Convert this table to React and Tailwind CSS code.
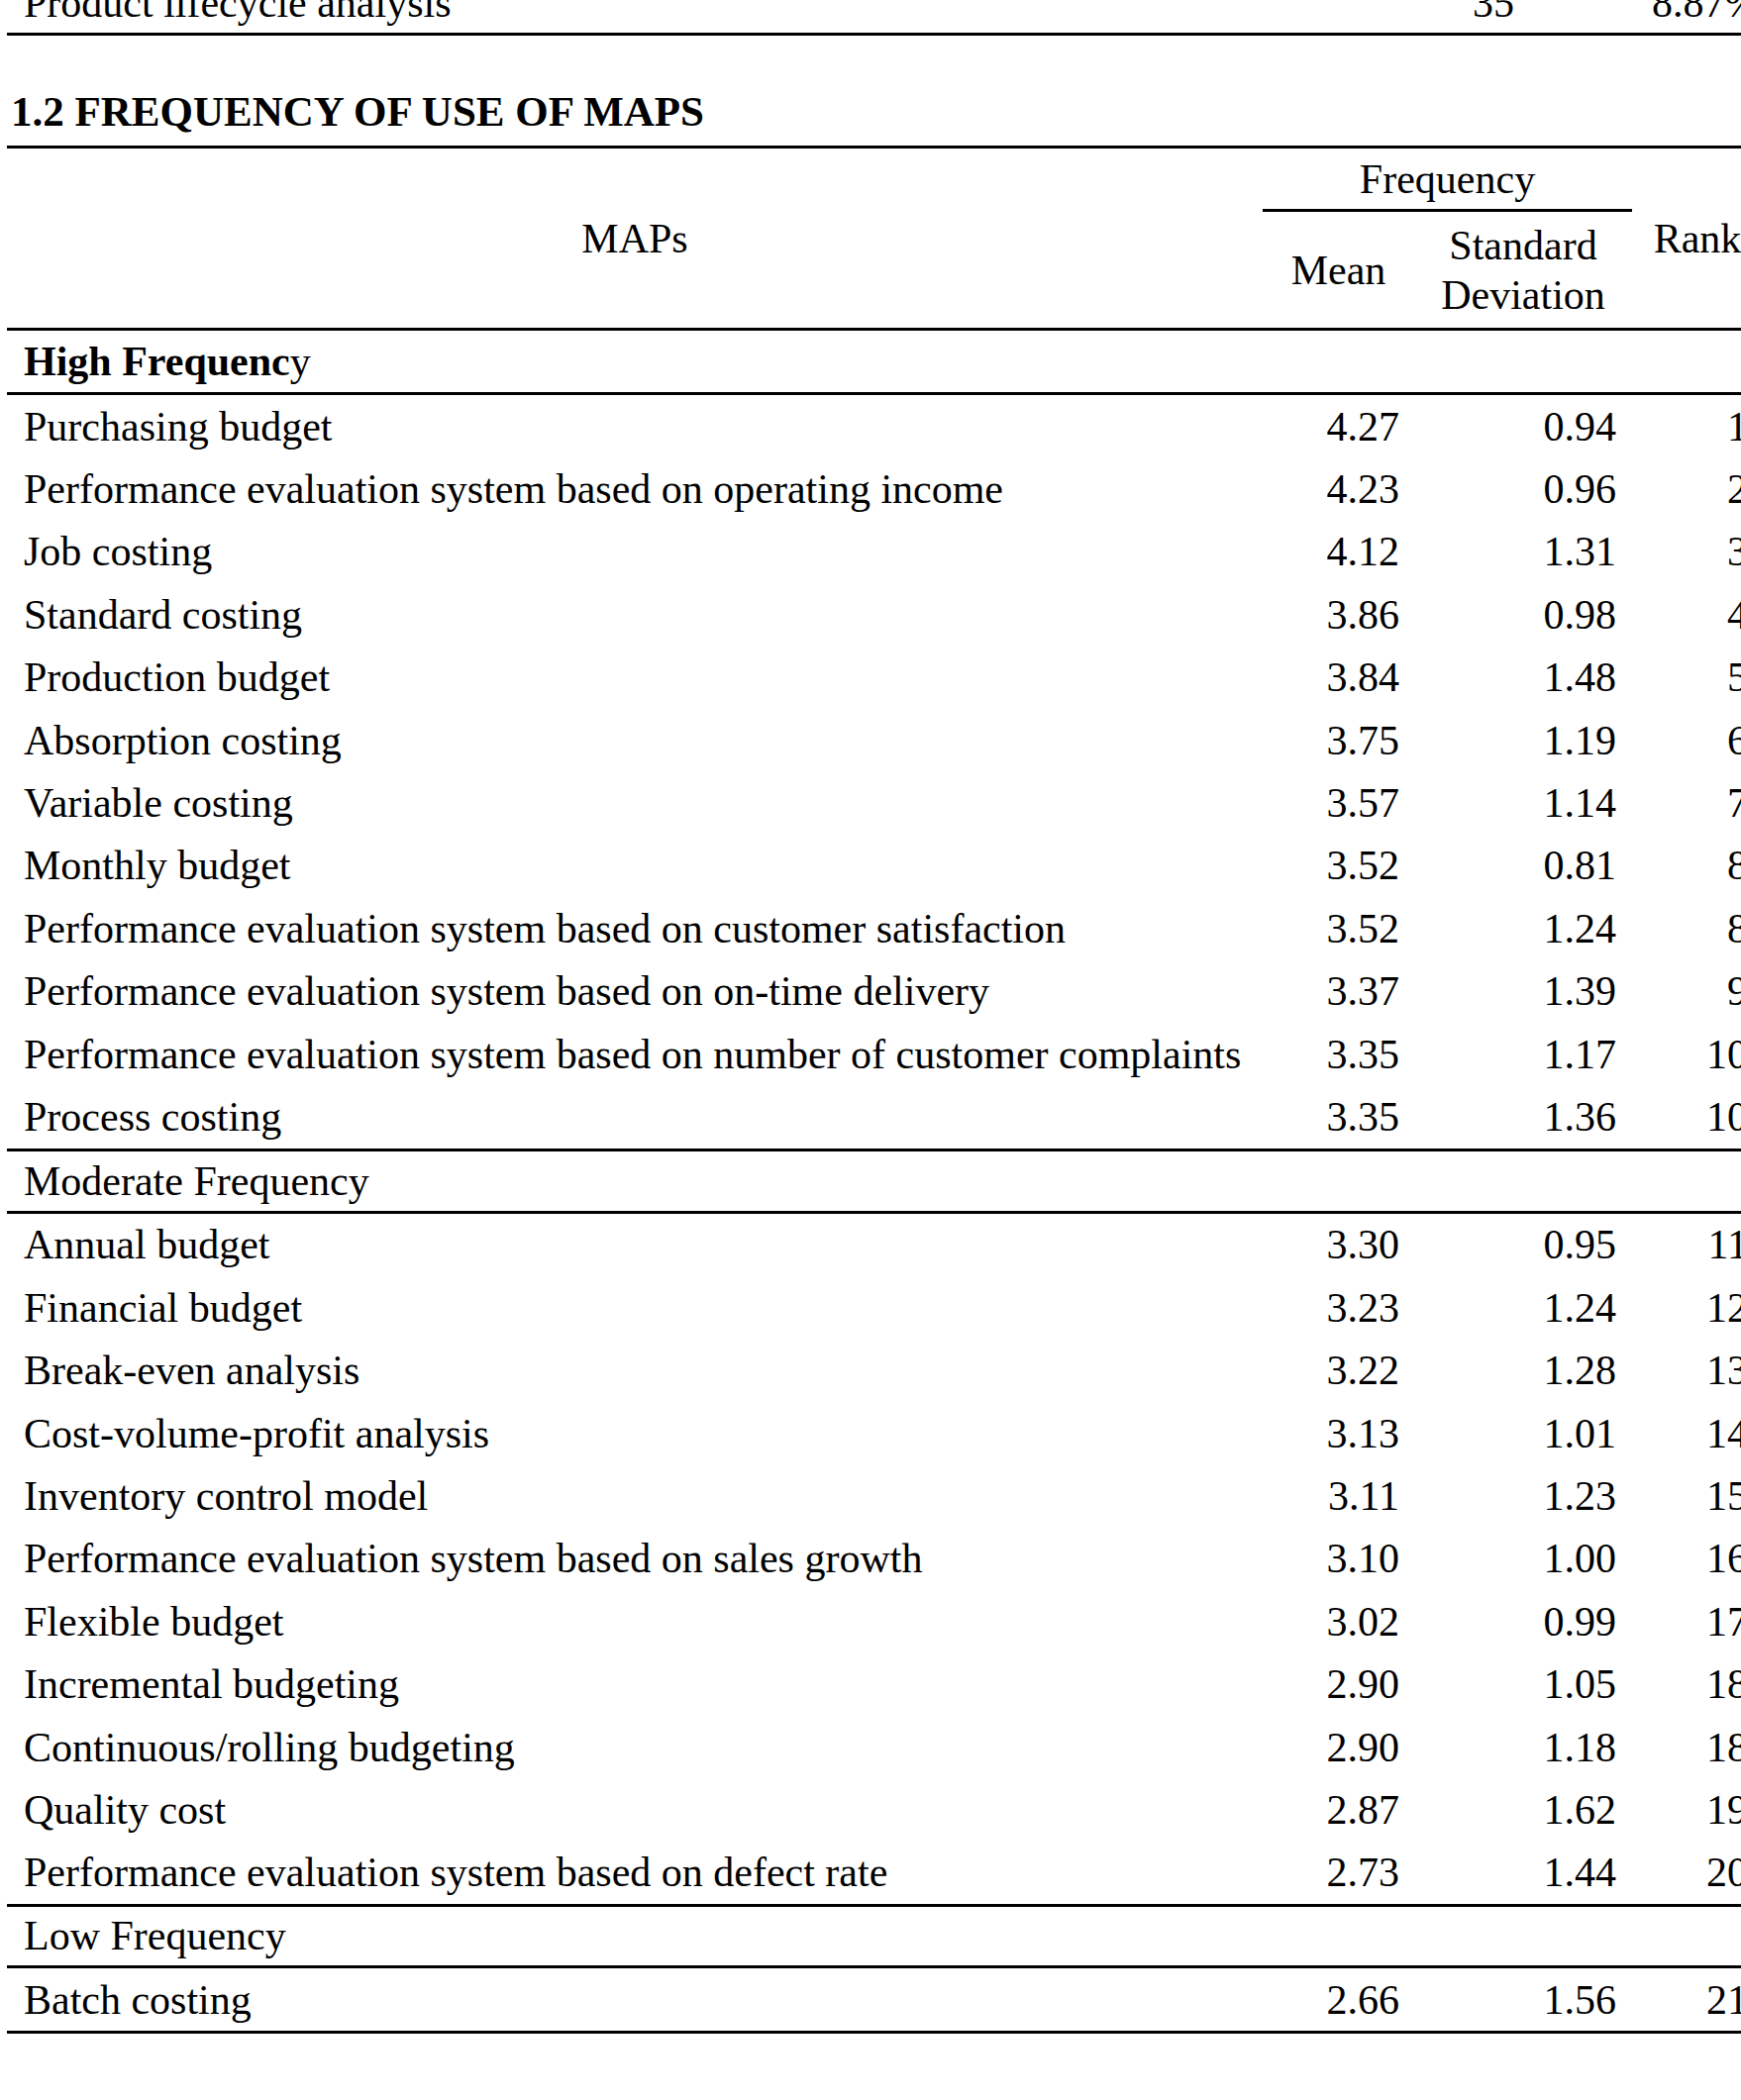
const high = [
  ['Purchasing budget', '4.27', '0.94', '1'],
  ['Performance evaluation system based on operating income', '4.23', '0.96', '2'],
  ['Job costing', '4.12', '1.31', '3'],
  ['Standard costing', '3.86', '0.98', '4'],
  ['Production budget', '3.84', '1.48', '5'],
  ['Absorption costing', '3.75', '1.19', '6'],
  ['Variable costing', '3.57', '1.14', '7'],
  ['Monthly budget', '3.52', '0.81', '8'],
  ['Performance evaluation system based on customer satisfaction', '3.52', '1.24', '8'],
  ['Performance evaluation system based on on-time delivery', '3.37', '1.39', '9'],
  ['Performance evaluation system based on number of customer complaints', '3.35', '1.17', '10'],
  ['Process costing', '3.35', '1.36', '10'],
];

const moderate = [
  ['Annual budget', '3.30', '0.95', '11'],
  ['Financial budget', '3.23', '1.24', '12'],
  ['Break-even analysis', '3.22', '1.28', '13'],
  ['Cost-volume-profit analysis', '3.13', '1.01', '14'],
  ['Inventory control model', '3.11', '1.23', '15'],
  ['Performance evaluation system based on sales growth', '3.10', '1.00', '16'],
  ['Flexible budget', '3.02', '0.99', '17'],
  ['Incremental budgeting', '2.90', '1.05', '18'],
  ['Continuous/rolling budgeting', '2.90', '1.18', '18'],
  ['Quality cost', '2.87', '1.62', '19'],
  ['Performance evaluation system based on defect rate', '2.73', '1.44', '20'],
];

const low = [['Batch costing', '2.66', '1.56', '21']];

const Rule = () => <div className="h-[3px] bg-black" />;

const Row = ({ item }) => (
  <div className="grid grid-cols-[1268px_153px_220px_132px] h-[63.4px] items-center">
    <div className="pl-[17px] whitespace-nowrap">{item[0]}</div>
    <div className="text-right pr-[15px]">{item[1]}</div>
    <div className="text-right pr-[16px]">{item[2]}</div>
    <div className="text-right pr-[15px]">{item[3]}</div>
  </div>
);

const Section = ({ h, children }) => (
  <div className={`flex items-center pl-[17px] ${h}`}>{children}</div>
);

export default function App() {
  return (
    <div className="w-[1758px] h-[2121px] overflow-hidden bg-white text-black font-['Liberation_Serif',serif] text-[42px] leading-[48px]">
      <div className="w-[1790px] ml-[7px]">
        {/* tail of the previous table */}
        <div className="grid grid-cols-[1268px_270px_1fr] h-[60px] -mt-[27px] items-center">
          <div className="pl-[17px]">Product lifecycle analysis</div>
          <div className="text-right pr-[16px]">35</div>
          <div className="pl-[123px]">8.87%</div>
        </div>
        <Rule />

        <h2 className="font-bold text-[43px] mt-[53px] mb-[10px] pl-[4px]">1.2 FREQUENCY OF USE OF MAPS</h2>
        <Rule />

        <div className="grid grid-cols-[1268px_153px_220px_132px] grid-rows-[61px_3px_117px]">
          <div className="row-span-3 flex items-center justify-center">MAPs</div>
          <div className="col-span-2 flex items-center justify-center">Frequency</div>
          <div className="row-span-3 flex items-center justify-center">Rank</div>
          <div className="col-span-2 bg-black" />
          <div className="flex items-center justify-center">Mean</div>
          <div className="flex items-center justify-center text-center leading-[50px]">
            Standard
            <br />
            Deviation
          </div>
        </div>
        <Rule />

        <Section h="h-[62px]">
          <b>High Frequenc</b>y
        </Section>
        <Rule />
        {high.map((item) => (
          <Row key={item[0]} item={item} />
        ))}
        <Rule />

        <Section h="h-[60px]">Moderate Frequency</Section>
        <Rule />
        {moderate.map((item) => (
          <Row key={item[0]} item={item} />
        ))}
        <Rule />

        <Section h="h-[59px]">Low Frequency</Section>
        <Rule />
        {low.map((item) => (
          <Row key={item[0]} item={item} />
        ))}
        <Rule />
      </div>
    </div>
  );
}
